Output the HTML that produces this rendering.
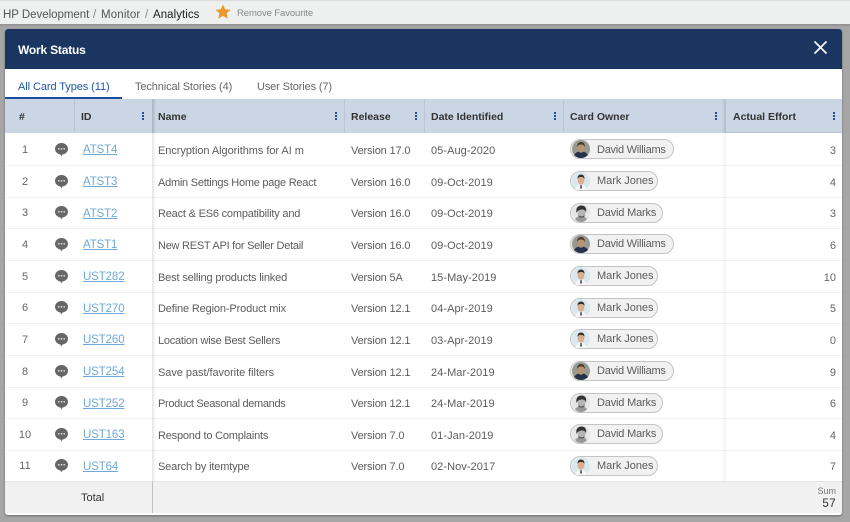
<!DOCTYPE html>
<html><head><meta charset="utf-8">
<style>
html,body{margin:0;padding:0;width:850px;height:522px;overflow:hidden;background:#a6a6a6;font-family:"Liberation Sans",sans-serif;}
.a,.t{position:absolute;white-space:nowrap;}
.t{line-height:14px;height:14px;}
#top{left:0;top:0;width:850px;height:24px;background:#eeefef;border-top:1px solid #dcdcdc;box-sizing:border-box;}
#shade{left:0;top:24px;width:850px;height:3px;background:linear-gradient(#8f8f8f,#a6a6a6);}
#modal{left:5px;top:29px;width:837px;height:486px;background:#fff;border-radius:3px;overflow:hidden;box-shadow:0 1px 2px rgba(0,0,0,.35);}
.c{font-size:11px;color:#5c5c5c;margin-top:1px;}
.v{letter-spacing:-.15px;left:351px;}
.d{letter-spacing:.06px;left:431px;}
.h{font-size:10.5px;font-weight:bold;color:#333;top:110px;}
.l{font-size:11.5px;color:#6fa8d6;text-decoration:underline;letter-spacing:-.12px;left:83px;margin-top:1px;}
.n{font-size:11px;color:#666;text-align:right;width:30px;left:806px;margin-top:1px;}
.i{font-size:11px;color:#666;text-align:center;width:20px;left:15px;}
.name{font-size:11px;color:#5c5c5c;left:597px;}
.nw{letter-spacing:-.25px;}
.nj{letter-spacing:-.04px;}
.nm{letter-spacing:-.18px;}
.rb{left:5px;width:837px;height:1px;background:#f2f2f2;}
.chip{position:absolute;left:570px;height:20px;box-sizing:border-box;border:1px solid #c4c4c4;border-radius:11px;background:#f1f1f1;}
.dots{position:absolute;top:112px;width:2px;height:2px;background:#1f4f9e;box-shadow:0 3px 0 #1f4f9e,0 6px 0 #1f4f9e;}
.hs{position:absolute;top:99px;width:1px;height:34px;background:#b9c6d6;}
svg{position:absolute;}
.cm{left:55px;margin-top:1px;}
</style></head>
<body>
<svg width="0" height="0" style="position:absolute"><defs>
<symbol id="cm" viewBox="0 0 13 14"><ellipse cx="6.500" cy="5.800" rx="6.500" ry="5.800" fill="#666"/><path d="M4.800 10.500l1.700 3 1.200-3z" fill="#666"/><circle cx="3.800" cy="5.800" r=".85" fill="#e8e8e8"/><circle cx="6.500" cy="5.800" r=".85" fill="#e8e8e8"/><circle cx="9.200" cy="5.800" r=".85" fill="#e8e8e8"/></symbol>
<symbol id="dw" viewBox="0 0 18 18"><circle cx="9" cy="9" r="9" fill="#979a92"/><path d="M2 15c2-3 4-3.500 7-3.500s5 .5 7 3.500c-2 2-4.500 3-7 3s-5-1-7-3z" fill="#25324a"/><ellipse cx="9" cy="8" rx="3.400" ry="4.800" fill="#b8946f"/><path d="M5.200 7c-.3-3 1.300-5 3.800-5s4.100 2 3.800 5c-1-2-1.800-2.500-3.800-2.500S6.200 5 5.200 7z" fill="#4a3a2a"/></symbol>
<symbol id="mj" viewBox="0 0 18 18"><circle cx="9" cy="9" r="9" fill="#d5e9ef"/><path d="M3.500 18c.5-4 2.500-5.500 5.500-5.500s5 1.500 5.500 5.500z" fill="#f6f6f6"/><path d="M8.400 13h1.200l.3 3.500H8.100z" fill="#444"/><ellipse cx="9" cy="8" rx="3.400" ry="4.700" fill="#dcae8e"/><path d="M5.600 7c-.4-3 1.300-4.500 3.400-4.500S12.800 4 12.400 7c-.7-1.700-1.800-2-3.400-2s-2.700.3-3.400 2z" fill="#3a302a"/></symbol>
<symbol id="dm" viewBox="0 0 18 18"><circle cx="9" cy="9" r="9" fill="#e6e6e6"/><path d="M3 15c2-2 3.500-3 6-3s4.500 1 6 3c-1.500 2-3.500 3-6 3s-4.500-1-6-3z" fill="#999"/><ellipse cx="9.500" cy="8.500" rx="3.900" ry="5" fill="#b5b5b5"/><path d="M4.500 9C3.500 4 6 1.500 9.500 1.500S15 4 14 8.500c-.5-2-1.500-3-4-3-2.500 0-4.500 1-5.500 3.500z" fill="#333"/><path d="M6.500 10.500c1 2.500 5 2.500 6 0v2c-1.500 1.500-4.500 1.500-6 0z" fill="#555"/></symbol>
</defs></svg>

<div id="top" class="a"></div>
<div id="shade" class="a"></div>
<span class="t" style="left:3px;top:8px;font-size:11.500px;color:#555;letter-spacing:-.03px">HP Development</span>
<span class="t" style="left:93px;top:8px;font-size:11.500px;color:#888">/</span>
<span class="t" style="left:101px;top:8px;font-size:11.500px;color:#555;letter-spacing:.15px">Monitor</span>
<span class="t" style="left:145px;top:8px;font-size:11.500px;color:#888">/</span>
<span class="t" style="left:153px;top:8px;font-size:11.500px;color:#222;letter-spacing:.05px">Analytics</span>
<svg style="left:215px;top:4px" width="16" height="15" viewBox="0 0 16 15"><path d="M8 .5l2.200 4.800 5.300.6-3.900 3.500 1.100 5.200L8 11.900l-4.700 2.700 1.100-5.200L.5 5.900l5.300-.6z" fill="#e8982f"/></svg>
<span class="t" style="left:237px;top:7px;font-size:9.500px;color:#888;letter-spacing:-.1px">Remove Favourite</span>

<div id="modal" class="a"></div>
<div class="a" style="left:5px;top:29px;width:837px;height:40px;background:#1a355f;border-radius:3px 3px 0 0"></div>
<span class="t" style="left:18px;top:43px;font-size:12px;font-weight:bold;color:#fff;letter-spacing:-.2px">Work Status</span>
<svg style="left:813px;top:40px" width="15" height="15" viewBox="0 0 15 15"><path d="M1.500 1.500l12 12M13.500 1.500l-12 12" stroke="#fff" stroke-width="1.700" fill="none"/></svg>

<span class="t" style="left:18px;top:80px;font-size:11px;color:#1f56a8;letter-spacing:-.08px">All Card Types (11)</span>
<span class="t" style="left:135px;top:80px;font-size:11px;color:#666;letter-spacing:-.12px">Technical Stories (4)</span>
<span class="t" style="left:257px;top:80px;font-size:11px;color:#666;letter-spacing:-.13px">User Stories (7)</span>
<div class="a" style="left:5px;top:97px;width:117px;height:2px;background:#1d4f9f"></div>

<div class="a" style="left:5px;top:99px;width:837px;height:34px;background:#cad6e4"></div>
<span class="t h" style="left:19px">#</span>
<span class="t h" style="left:81px">ID</span>
<span class="t h" style="left:158px">Name</span>
<span class="t h" style="left:351px">Release</span>
<span class="t h" style="left:431px">Date Identified</span>
<span class="t h" style="left:570px">Card Owner</span>
<span class="t h" style="left:733px">Actual Effort</span>
<div class="dots" style="left:142px"></div><div class="dots" style="left:335px"></div><div class="dots" style="left:415px"></div><div class="dots" style="left:554px"></div><div class="dots" style="left:715px"></div><div class="dots" style="left:833px"></div>
<div class="hs" style="left:74px"></div><div class="hs" style="left:344px"></div><div class="hs" style="left:424px"></div><div class="hs" style="left:563px"></div>

<div class="a rb" style="top:165px"></div><div class="a rb" style="top:197px"></div><div class="a rb" style="top:228px"></div><div class="a rb" style="top:260px"></div><div class="a rb" style="top:292px"></div><div class="a rb" style="top:323px"></div><div class="a rb" style="top:355px"></div><div class="a rb" style="top:387px"></div><div class="a rb" style="top:418px"></div><div class="a rb" style="top:450px"></div>

<!-- fixed column shadows -->
<div class="a" style="left:152px;top:133px;width:4px;height:348px;background:linear-gradient(90deg,rgba(0,0,0,.1),rgba(0,0,0,0))"></div>
<div class="a" style="left:152px;top:99px;width:4px;height:34px;background:linear-gradient(90deg,rgba(0,0,0,.16),rgba(0,0,0,0))"></div>
<div class="a" style="left:722px;top:133px;width:4px;height:348px;background:linear-gradient(90deg,rgba(0,0,0,0),rgba(0,0,0,.05))"></div>
<div class="a" style="left:722px;top:99px;width:4px;height:34px;background:linear-gradient(90deg,rgba(0,0,0,0),rgba(0,0,0,.12))"></div>
<div class="a" style="left:726px;top:132px;width:116px;height:1px;background:#b8c3d0"></div>

<!-- rows -->
<span class="t i" style="top:143px">1</span><svg class="cm" style="top:142px" width="13" height="14"><use href="#cm"/></svg><span class="t l" style="top:142px">ATST4</span><span class="t c" style="left:158px;top:143px;letter-spacing:-.05px">Encryption Algorithms for AI m</span><span class="t c v" style="top:143px">Version 17.0</span><span class="t c d" style="top:143px">05-Aug-2020</span><div class="chip" style="top:139px;width:104px"></div><svg style="left:572px;top:140px" width="18" height="18"><use href="#dw"/></svg><span class="t name nw" style="top:143px">David Williams</span><span class="t n" style="top:143px">3</span>

<span class="t i" style="top:175px">2</span><svg class="cm" style="top:174px" width="13" height="14"><use href="#cm"/></svg><span class="t l" style="top:174px">ATST3</span><span class="t c" style="left:158px;top:175px;letter-spacing:-.25px">Admin Settings Home page React</span><span class="t c v" style="top:175px">Version 16.0</span><span class="t c d" style="top:175px">09-Oct-2019</span><div class="chip" style="top:171px;width:88px"></div><svg style="left:572px;top:172px" width="18" height="18"><use href="#mj"/></svg><span class="t name nj" style="top:174px">Mark Jones</span><span class="t n" style="top:175px">4</span>

<span class="t i" style="top:206px">3</span><svg class="cm" style="top:205px" width="13" height="14"><use href="#cm"/></svg><span class="t l" style="top:206px">ATST2</span><span class="t c" style="left:158px;top:206px;letter-spacing:-.2px">React &amp; ES6 compatibility and</span><span class="t c v" style="top:206px">Version 16.0</span><span class="t c d" style="top:206px">09-Oct-2019</span><div class="chip" style="top:203px;width:93px"></div><svg style="left:572px;top:204px" width="18" height="18"><use href="#dm"/></svg><span class="t name nm" style="top:206px">David Marks</span><span class="t n" style="top:206px">3</span>

<span class="t i" style="top:238px">4</span><svg class="cm" style="top:237px" width="13" height="14"><use href="#cm"/></svg><span class="t l" style="top:237px">ATST1</span><span class="t c" style="left:158px;top:238px;letter-spacing:-.25px">New REST API for Seller Detail</span><span class="t c v" style="top:238px">Version 16.0</span><span class="t c d" style="top:238px">09-Oct-2019</span><div class="chip" style="top:234px;width:104px"></div><svg style="left:572px;top:235px" width="18" height="18"><use href="#dw"/></svg><span class="t name nw" style="top:237px">David Williams</span><span class="t n" style="top:238px">6</span>

<span class="t i" style="top:270px">5</span><svg class="cm" style="top:269px" width="13" height="14"><use href="#cm"/></svg><span class="t l" style="top:269px">UST282</span><span class="t c" style="left:158px;top:270px;letter-spacing:-.15px">Best selling products linked</span><span class="t c v" style="top:270px">Version 5A</span><span class="t c d" style="top:270px">15-May-2019</span><div class="chip" style="top:266px;width:88px"></div><svg style="left:572px;top:267px" width="18" height="18"><use href="#mj"/></svg><span class="t name nj" style="top:269px">Mark Jones</span><span class="t n" style="top:270px">10</span>

<span class="t i" style="top:301px">6</span><svg class="cm" style="top:300px" width="13" height="14"><use href="#cm"/></svg><span class="t l" style="top:301px">UST270</span><span class="t c" style="left:158px;top:301px;letter-spacing:-.14px">Define Region-Product mix</span><span class="t c v" style="top:301px">Version 12.1</span><span class="t c d" style="top:301px">04-Apr-2019</span><div class="chip" style="top:298px;width:88px"></div><svg style="left:572px;top:299px" width="18" height="18"><use href="#mj"/></svg><span class="t name nj" style="top:301px">Mark Jones</span><span class="t n" style="top:301px">5</span>

<span class="t i" style="top:333px">7</span><svg class="cm" style="top:332px" width="13" height="14"><use href="#cm"/></svg><span class="t l" style="top:332px">UST260</span><span class="t c" style="left:158px;top:333px;letter-spacing:-.24px">Location wise Best Sellers</span><span class="t c v" style="top:333px">Version 12.1</span><span class="t c d" style="top:333px">03-Apr-2019</span><div class="chip" style="top:329px;width:88px"></div><svg style="left:572px;top:330px" width="18" height="18"><use href="#mj"/></svg><span class="t name nj" style="top:332px">Mark Jones</span><span class="t n" style="top:333px">0</span>

<span class="t i" style="top:365px">8</span><svg class="cm" style="top:364px" width="13" height="14"><use href="#cm"/></svg><span class="t l" style="top:364px">UST254</span><span class="t c" style="left:158px;top:365px;letter-spacing:-.05px">Save past/favorite filters</span><span class="t c v" style="top:365px">Version 12.1</span><span class="t c d" style="top:365px">24-Mar-2019</span><div class="chip" style="top:361px;width:104px"></div><svg style="left:572px;top:362px" width="18" height="18"><use href="#dw"/></svg><span class="t name nw" style="top:364px">David Williams</span><span class="t n" style="top:365px">9</span>

<span class="t i" style="top:396px">9</span><svg class="cm" style="top:395px" width="13" height="14"><use href="#cm"/></svg><span class="t l" style="top:396px">UST252</span><span class="t c" style="left:158px;top:396px;letter-spacing:-.32px">Product Seasonal demands</span><span class="t c v" style="top:396px">Version 12.1</span><span class="t c d" style="top:396px">24-Mar-2019</span><div class="chip" style="top:393px;width:93px"></div><svg style="left:572px;top:394px" width="18" height="18"><use href="#dm"/></svg><span class="t name nm" style="top:396px">David Marks</span><span class="t n" style="top:396px">6</span>

<span class="t i" style="top:428px">10</span><svg class="cm" style="top:427px" width="13" height="14"><use href="#cm"/></svg><span class="t l" style="top:427px">UST163</span><span class="t c" style="left:158px;top:428px;letter-spacing:-.2px">Respond to Complaints</span><span class="t c v" style="top:428px">Version 7.0</span><span class="t c d" style="top:428px">01-Jan-2019</span><div class="chip" style="top:424px;width:93px"></div><svg style="left:572px;top:425px" width="18" height="18"><use href="#dm"/></svg><span class="t name nm" style="top:427px">David Marks</span><span class="t n" style="top:428px">4</span>

<span class="t i" style="top:459px">11</span><svg class="cm" style="top:458px" width="13" height="14"><use href="#cm"/></svg><span class="t l" style="top:459px">UST64</span><span class="t c" style="left:158px;top:459px;letter-spacing:-.15px">Search by itemtype</span><span class="t c v" style="top:459px">Version 7.0</span><span class="t c d" style="top:459px">02-Nov-2017</span><div class="chip" style="top:456px;width:88px"></div><svg style="left:572px;top:457px" width="18" height="18"><use href="#mj"/></svg><span class="t name nj" style="top:459px">Mark Jones</span><span class="t n" style="top:459px">7</span>

<!-- footer -->
<div class="a" style="left:5px;top:481px;width:837px;height:32px;background:#f1f1f1;border-top:1px solid #e4e4e4;box-sizing:border-box"></div>
<div class="a" style="left:152px;top:481px;width:1px;height:32px;background:#c4c4c4"></div>
<span class="t" style="left:81px;top:491px;font-size:11px;color:#333">Total</span>
<span class="t" style="left:806px;width:30px;text-align:right;top:484px;font-size:9px;color:#777">Sum</span>
<span class="t" style="left:806px;width:30px;text-align:right;top:497px;font-size:11.500px;color:#333;letter-spacing:.4px">57</span>
</body></html>
